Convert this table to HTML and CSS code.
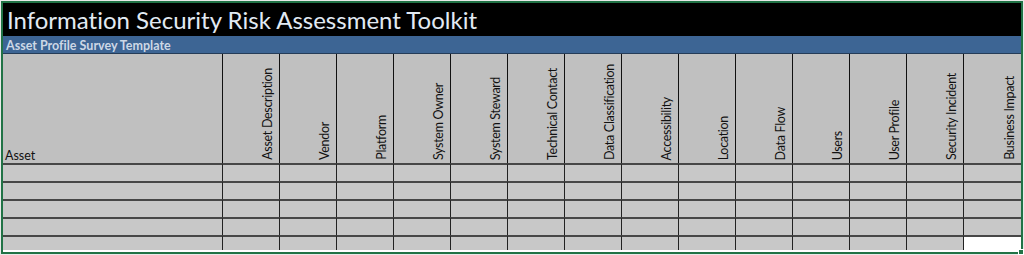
FILE: index.html
```html
<!DOCTYPE html>
<html>
<head>
<meta charset="utf-8">
<link rel="stylesheet" href="styles.css">
</head>
<body>
<div class="frame">
  <div class="title">Information Security Risk Assessment Toolkit</div>
  <div class="subtitle">Asset Profile Survey Template</div>
  <div class="grid">
    <div class="hcell first"><span>Asset</span></div>
    <div class="hcell"><span class="vt">Asset Description</span></div>
    <div class="hcell"><span class="vt">Vendor</span></div>
    <div class="hcell"><span class="vt">Platform</span></div>
    <div class="hcell"><span class="vt">System Owner</span></div>
    <div class="hcell"><span class="vt">System Steward</span></div>
    <div class="hcell"><span class="vt">Technical Contact</span></div>
    <div class="hcell"><span class="vt">Data Classification</span></div>
    <div class="hcell"><span class="vt">Accessibility</span></div>
    <div class="hcell"><span class="vt">Location</span></div>
    <div class="hcell"><span class="vt">Data Flow</span></div>
    <div class="hcell"><span class="vt">Users</span></div>
    <div class="hcell"><span class="vt">User Profile</span></div>
    <div class="hcell"><span class="vt">Security Incident</span></div>
    <div class="hcell"><span class="vt">Business Impact</span></div>

    <div class="cell first"></div><div class="cell"></div><div class="cell"></div><div class="cell"></div><div class="cell"></div><div class="cell"></div><div class="cell"></div><div class="cell"></div><div class="cell"></div><div class="cell"></div><div class="cell"></div><div class="cell"></div><div class="cell"></div><div class="cell"></div><div class="cell"></div>
    <div class="cell first"></div><div class="cell"></div><div class="cell"></div><div class="cell"></div><div class="cell"></div><div class="cell"></div><div class="cell"></div><div class="cell"></div><div class="cell"></div><div class="cell"></div><div class="cell"></div><div class="cell"></div><div class="cell"></div><div class="cell"></div><div class="cell"></div>
    <div class="cell first"></div><div class="cell"></div><div class="cell"></div><div class="cell"></div><div class="cell"></div><div class="cell"></div><div class="cell"></div><div class="cell"></div><div class="cell"></div><div class="cell"></div><div class="cell"></div><div class="cell"></div><div class="cell"></div><div class="cell"></div><div class="cell"></div>
    <div class="cell first"></div><div class="cell"></div><div class="cell"></div><div class="cell"></div><div class="cell"></div><div class="cell"></div><div class="cell"></div><div class="cell"></div><div class="cell"></div><div class="cell"></div><div class="cell"></div><div class="cell"></div><div class="cell"></div><div class="cell"></div><div class="cell"></div>
    <div class="cell first"></div><div class="cell"></div><div class="cell"></div><div class="cell"></div><div class="cell"></div><div class="cell"></div><div class="cell"></div><div class="cell"></div><div class="cell"></div><div class="cell"></div><div class="cell"></div><div class="cell"></div><div class="cell"></div><div class="cell"></div><div class="cell blank"></div>
  </div>
  <div class="handle"></div>
</div>
</body>
</html>
```

FILE: styles.css
```css
html, body {
  margin: 0;
  padding: 0;
}
body {
  background: #e9e9e9;
  width: 1024px;
  height: 255px;
  overflow: hidden;
  padding: 1px 0 0 1px;
  box-sizing: border-box;
  font-family: Lato, "Open Sans", sans-serif;
  font-variant-ligatures: none;
}
.frame {
  position: relative;
  width: 1022px;
  height: 253px;
  box-sizing: border-box;
  border: 2px solid #217346;
  background: #ffffff;
  display: flex;
  flex-direction: column;
}
.title {
  height: 33px;
  flex: none;
  background: #000000;
  color: #e2eaf3;
  font-size: 24px;
  line-height: 34px;
  padding-left: 4px;
  white-space: nowrap;
}
.subtitle {
  height: 17px;
  flex: none;
  background: #3d6594;
  border-bottom: 1px solid #253c58;
  color: #cdd8e6;
  font-weight: bold;
  font-size: 12.5px;
  line-height: 19px;
  padding-left: 3px;
  box-sizing: content-box;
  overflow: hidden;
}
.grid {
  display: grid;
  grid-template-columns: 219px repeat(13, 57px) 58px;
  grid-template-rows: 109px 18px 18px 18px 18px 15px;
  background: #ffffff;
}
.hcell {
  background: #c0c0c0;
  border-left: 1px solid #111;
  display: flex;
  justify-content: flex-end;
  align-items: flex-end;
  padding: 0 4px 3px 0;
  color: #111;
  font-size: 12.5px;
  letter-spacing: -0.3px;
  overflow: hidden;
}
.hcell.first {
  border-left: none;
  justify-content: flex-start;
  padding-left: 2px;
  padding-bottom: 0;
  letter-spacing: 0;
}
.vt {
  writing-mode: vertical-rl;
  transform: rotate(180deg);
  line-height: 14px;
  white-space: nowrap;
}
.cell {
  background: #c8c8c8;
  border-left: 1px solid #222;
  border-top: 2px solid #474747;
}
.cell.first {
  border-left: none;
}
.cell.blank {
  background: #ffffff;
}
.handle {
  position: absolute;
  right: -3px;
  bottom: -3px;
  width: 4px;
  height: 4px;
  background: #217346;
  border: 1px solid #fff;
}
```
